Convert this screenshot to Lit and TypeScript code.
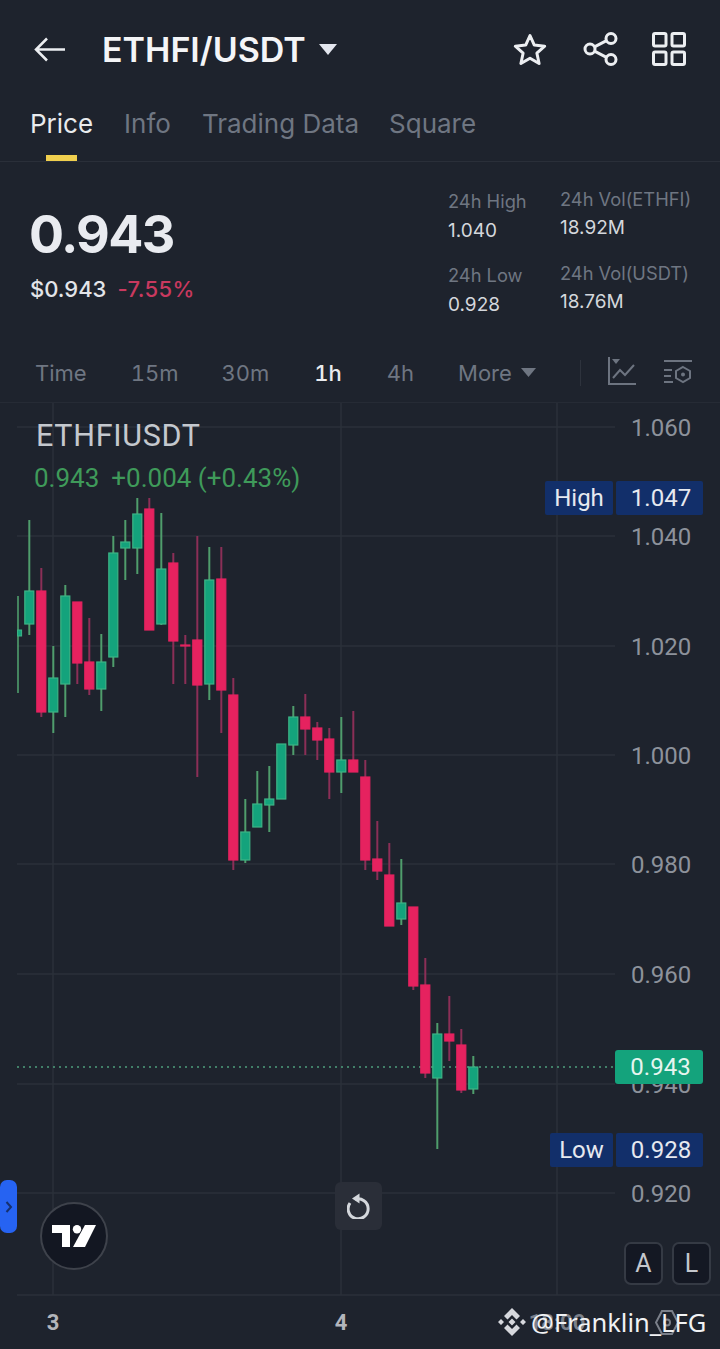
import {html, css, svg, LitElement} from 'lit';
import {customElement} from 'lit/decorators.js';

// x, wick top, wick bottom, body top, body bottom, up?
const candles: [number, number, number, number, number, boolean][] = [
  [29.3, 520, 635, 591, 624, true],
  [41.3, 568, 717, 591, 712, false],
  [53.3, 646, 733, 678, 712, true],
  [65.3, 585, 717, 596, 684, true],
  [77.3, 602, 684, 602, 663, false],
  [89.3, 618, 695, 662, 689, false],
  [101.3, 634, 711, 662, 689, true],
  [113.3, 536, 667, 553, 657, true],
  [125.3, 520, 580, 542, 548, true],
  [137.3, 498, 574, 514, 548, true],
  [149.3, 498, 630, 509, 630, false],
  [161.3, 513, 625, 569, 624, true],
  [173.3, 553, 684, 563, 641, false],
  [185.3, 635, 684, 645, 646, false],
  [197.3, 536, 777, 640, 685, false],
  [209.3, 547, 700, 580, 684, true],
  [221.3, 547, 733, 579, 690, false],
  [233.3, 678, 870, 695, 860, false],
  [245.3, 799, 863, 832, 860, true],
  [257.3, 771, 827, 804, 827, true],
  [269.3, 766, 832, 799, 805, true],
  [281.3, 744, 799, 744, 799, true],
  [293.3, 706, 755, 717, 745, true],
  [305.3, 694, 755, 717, 729, false],
  [317.3, 722, 760, 728, 740, false],
  [329.3, 728, 799, 739, 772, false],
  [341.3, 717, 793, 760, 772, true],
  [353.3, 711, 772, 760, 772, false],
  [365.3, 760, 870, 777, 860, false],
  [377.3, 821, 880, 859, 871, false],
  [389.3, 843, 926, 875, 926, false],
  [401.3, 859, 925, 903, 919, true],
  [413.3, 907, 990, 907, 986, false],
  [425.3, 958, 1078, 985, 1073, false],
  [437.3, 1023, 1149, 1034, 1078, true],
  [449.3, 996, 1061, 1034, 1041, false],
  [461.3, 1029, 1093, 1045, 1090, false],
  [473.3, 1056, 1094, 1067, 1089, true],
];

const prices: [string, number][] = [
  ['1.060', 427],
  ['1.040', 536],
  ['1.020', 646],
  ['1.000', 755],
  ['0.980', 864],
  ['0.960', 974],
  ['0.940', 1084],
  ['0.920', 1193],
];

const CHART_TOP = 403;

@customElement('app-root')
export class AppRoot extends LitElement {
  static styles = css`
    :host {
      display: block;
      width: 720px;
      height: 1349px;
      overflow: hidden;
      background: #1e232d;
      color: #eaecef;
      font-family: Inter, 'Liberation Sans', sans-serif;
    }

    .page {
      display: flex;
      flex-direction: column;
      height: 100%;
    }

    .top {
      display: flex;
      align-items: center;
      height: 98px;
      padding: 0 34px;
      box-sizing: border-box;
    }
    .top svg {
      display: block;
      flex: none;
    }
    .title {
      margin-left: 37px;
      font-size: 34px;
      font-weight: 600;
      color: #f4f5f7;
    }
    .caret {
      margin-left: 13px;
    }
    .top-icons {
      display: flex;
      align-items: center;
      gap: 34px;
      margin-left: auto;
    }
    .star {
      margin-right: 2px;
    }

    .tabs {
      display: flex;
      gap: 31px;
      height: 63px;
      padding: 0 0 0 30px;
      border-bottom: 1px solid #2a2f39;
      font-size: 26px;
      color: #6f7682;
    }
    .tab {
      position: relative;
      line-height: 52px;
      height: 63px;
    }
    .tab:last-child {
      margin-left: -1px;
    }
    .tab.on {
      color: #e9ebee;
    }
    .tab.on::after {
      content: '';
      position: absolute;
      left: 16px;
      bottom: 0;
      width: 31px;
      height: 6px;
      background: #f0cf4e;
    }

    .summary {
      display: flex;
      justify-content: space-between;
      height: 178px;
      padding-left: 30px;
    }
    .last {
      font-size: 52px;
      font-weight: 700;
      line-height: 60px;
      margin-top: 43px;
      margin-left: -1px;
      color: #e9ebf0;
      letter-spacing: -1.6px;
    }
    .fiat {
      display: flex;
      gap: 11px;
      margin-top: 9px;
      font-size: 22px;
      font-weight: 500;
      line-height: 30px;
      color: #e3e5e9;
    }
    .fiat .chg {
      color: #c9395f;
      letter-spacing: 0.4px;
    }
    .stats {
      display: grid;
      grid-template-columns: 112px 160px;
      align-content: start;
      margin-top: 25px;
    }
    .stat {
      height: 74px;
      padding-top: 2px;
      box-sizing: border-box;
    }
    .stat.shift {
      padding-top: 0;
    }
    .stat .k {
      font-size: 18.3px;
      line-height: 24px;
      color: #6f7682;
    }
    .stat .v {
      margin-top: 6px;
      font-size: 19px;
      line-height: 24px;
      color: #d4d7dc;
    }
    .stat.shift .v {
      margin-top: 5px;
    }

    .intervals {
      display: flex;
      align-items: center;
      gap: 45px;
      height: 63px;
      padding: 3px 0 1px 35px;
      box-sizing: border-box;
      font-size: 22px;
      font-variant-numeric: tabular-nums;
      color: #6f7682;
    }
    .iv {
      flex: none;
    }
    .iv:nth-child(2) {
      margin-left: -1px;
    }
    .iv:nth-child(3) {
      margin-left: -2px;
    }
    .iv:nth-child(6) {
      margin-left: -1px;
    }
    .iv.on {
      color: #e9ebee;
      font-weight: 500;
    }
    .more {
      display: flex;
      align-items: center;
      gap: 9px;
    }
    .sep {
      flex: none;
      width: 1px;
      height: 26px;
      background: #2e333d;
      margin-left: -1px;
    }
    .iv-icons {
      display: flex;
      gap: 28px;
      margin: 0 0 4px -18px;
    }
    .iv-icons svg {
      display: block;
    }

    .chart {
      position: relative;
      flex: 1;
      border-top: 1px solid #262b35;
      margin-top: -1px;
      overflow: hidden;
      font-family: Roboto, 'Liberation Sans', sans-serif;
    }
    .canvas {
      position: absolute;
      left: 0;
      top: 0;
    }
    .symbol {
      position: absolute;
      left: 36px;
      top: 15px;
      font-size: 30.5px;
      letter-spacing: 0.7px;
      line-height: 36px;
      color: #c4c8ce;
    }
    .ohlc {
      position: absolute;
      left: 34px;
      top: 58px;
      display: flex;
      gap: 12px;
      font-size: 26px;
      line-height: 34px;
      color: #3f9a5a;
      white-space: nowrap;
    }
    .price {
      position: absolute;
      left: 631px;
      font-size: 24px;
      line-height: 30px;
      color: #8d929b;
      transform: translateY(-14px);
    }
    .tag {
      position: absolute;
      display: flex;
      align-items: center;
      justify-content: center;
      height: 34px;
      font-size: 24px;
      border-radius: 2px;
      background: #122f6a;
      color: #e6e9ef;
    }
    .tag.now {
      left: 615px;
      top: 647px;
      width: 88px;
      padding-left: 3px;
      box-sizing: border-box;
      border-radius: 3px;
      background: #14a37c;
      color: #e6f5ef;
    }
    .tag.val {
      left: 616px;
      width: 87px;
      padding-left: 3px;
      box-sizing: border-box;
    }
    .tag.high {
      top: 78px;
    }
    .tag.low {
      top: 730px;
    }
    .tag.high-k {
      left: 545px;
      top: 78px;
      width: 68px;
    }
    .tag.low-k {
      left: 550px;
      top: 730px;
      width: 63px;
    }
    .side-tab {
      position: absolute;
      left: 0;
      top: 777px;
      display: flex;
      align-items: center;
      justify-content: center;
      width: 17px;
      height: 53px;
      border-radius: 7px;
      background: #2663f2;
    }
    .tv {
      position: absolute;
      left: 40px;
      top: 799px;
      display: flex;
      align-items: center;
      justify-content: center;
      width: 68px;
      height: 68px;
      box-sizing: border-box;
      border: 2px solid #3e424b;
      border-radius: 50%;
      background: #131722;
    }
    .reset {
      position: absolute;
      left: 335px;
      top: 779px;
      display: flex;
      align-items: center;
      justify-content: center;
      width: 47px;
      height: 48px;
      border-radius: 6px;
      background: #2a2e38;
    }
    .mode {
      position: absolute;
      top: 839px;
      display: flex;
      align-items: center;
      justify-content: center;
      width: 39px;
      height: 43px;
      box-sizing: border-box;
      border: 2px solid #353a44;
      border-radius: 7px;
      background: #141823;
      color: #c4c7cc;
      font-size: 25px;
    }
    .mode.a {
      left: 624px;
    }
    .mode.l {
      left: 672px;
    }
    .tick {
      position: absolute;
      top: 905px;
      font-size: 22px;
      font-weight: 700;
      line-height: 30px;
      color: #b2b5bc;
      transform: translateX(-50%);
    }
    .tick.dim {
      color: #7b808a;
    }
    .ghost {
      position: absolute;
      left: 655px;
      top: 907px;
    }
    .mark {
      position: absolute;
      left: 498px;
      top: 901px;
      display: flex;
      align-items: center;
      gap: 5px;
      font-family: 'Noto Sans', 'Liberation Sans', sans-serif;
      font-size: 25.5px;
      line-height: 36px;
      color: #f1f2f4;
      white-space: nowrap;
    }
  `;

  private grid() {
    return svg`
      ${prices.map(([, y]) => svg`<line x1="17" x2="615" y1=${y} y2=${y} stroke="#2b303a" stroke-width="1.5" />`)}
      <line x1="17" x2="720" y1="1295" y2="1295" stroke="#2b303a" stroke-width="1.5" />
      ${[53, 341, 557].map((x) => svg`<line x1=${x} x2=${x} y1="403" y2="1295" stroke="#2b303a" stroke-width="1.5" />`)}
    `;
  }

  private candle([x, wt, wb, bt, bb, up]: (typeof candles)[number]) {
    const wick = up ? '#4f9d6c' : '#8b2f57';
    const fill = up ? '#14a37c' : '#e6225f';
    const edge = up ? '#3db486' : '#e6225f';
    return svg`
      <line x1=${x} x2=${x} y1=${wt} y2=${wb} stroke=${wick} stroke-width="2" />
      <rect x=${x - 4.5} y=${bt} width="9" height=${Math.max(bb - bt, 1)} fill=${fill} stroke=${edge} stroke-width="1.2" />
    `;
  }

  render() {
    return html`
      <div class="page">
        <div class="top">
          <svg width="31" height="25" viewBox="0 0 31 25" fill="none" stroke="#eceef1" stroke-width="2.5">
            <path d="M31 12.5H2M13 1.5L2 12.5l11 11" />
          </svg>
          <span class="title">ETHFI/USDT</span>
          <svg class="caret" width="18" height="11" viewBox="0 0 18 11"><path d="M0 0h18L9 11z" fill="#e3e6ee" /></svg>
          <div class="top-icons">
            <svg class="star" width="34" height="33" viewBox="0 0 34 33" fill="none" stroke="#eceef1" stroke-width="3" stroke-linejoin="round">
              <path d="M17 2.5l4.3 9.6 10.4 1.1-7.8 7 2.2 10.3L17 25.2 7.9 30.5l2.2-10.3-7.8-7 10.4-1.1z" />
            </svg>
            <svg width="35" height="34" viewBox="0 0 35 34" fill="none" stroke="#eceef1" stroke-width="3">
              <circle cx="7" cy="17" r="5" />
              <circle cx="28" cy="6.5" r="5" />
              <circle cx="28" cy="27.5" r="5" />
              <path d="M11.5 14.8L23.5 8.7M11.5 19.2L23.5 25.3" />
            </svg>
            <svg width="34" height="34" viewBox="0 0 34 34" fill="none" stroke="#eceef1" stroke-width="3">
              <rect x="1.5" y="1.5" width="12.5" height="12.5" rx="1.5" />
              <rect x="20" y="1.5" width="12.5" height="12.5" rx="1.5" />
              <rect x="1.5" y="20" width="12.5" height="12.5" rx="1.5" />
              <rect x="20" y="20" width="12.5" height="12.5" rx="1.5" />
            </svg>
          </div>
        </div>

        <div class="tabs">
          <div class="tab on">Price</div>
          <div class="tab">Info</div>
          <div class="tab">Trading Data</div>
          <div class="tab">Square</div>
        </div>

        <div class="summary">
          <div>
            <div class="last">0.943</div>
            <div class="fiat"><span>$0.943</span><span class="chg">-7.55%</span></div>
          </div>
          <div class="stats">
            <div class="stat"><div class="k">24h High</div><div class="v">1.040</div></div>
            <div class="stat shift"><div class="k">24h Vol(ETHFI)</div><div class="v">18.92M</div></div>
            <div class="stat"><div class="k">24h Low</div><div class="v">0.928</div></div>
            <div class="stat shift"><div class="k">24h Vol(USDT)</div><div class="v">18.76M</div></div>
          </div>
        </div>

        <div class="intervals">
          <span class="iv">Time</span>
          <span class="iv">15m</span>
          <span class="iv">30m</span>
          <span class="iv on">1h</span>
          <span class="iv">4h</span>
          <span class="iv more">More
            <svg width="15" height="9" viewBox="0 0 15 9"><path d="M0 0h15L7.5 9z" fill="#6f7682" /></svg>
          </span>
          <span class="sep"></span>
          <div class="iv-icons">
            <svg width="28" height="28" viewBox="0 0 28 28" fill="none" stroke="#6d7480" stroke-width="2">
              <path d="M1 0v27h27M5 21l7-8 5 5 9-10" />
              <path d="M4 2h8L8 7z" fill="#6d7480" stroke="none" />
            </svg>
            <svg width="28" height="28" viewBox="0 0 28 28" fill="none" stroke="#6d7480" stroke-width="2">
              <path d="M0 4h28M0 13h8M0 19h7M0 25h9" />
              <path d="M19 10l7 4v7l-7 4-7-4v-7z" />
              <circle cx="19" cy="17.5" r="2" fill="#6d7480" stroke="none" />
            </svg>
          </div>
        </div>

        <div class="chart">
          <svg class="canvas" width="720" height="946" viewBox="0 ${CHART_TOP} 720 946">
            ${this.grid()}
            <line x1="17" x2="615" y1="1067" y2="1067" stroke="#4e9f7c" stroke-width="1.5" stroke-dasharray="2 4" />
            <line x1="18" x2="18" y1="596" y2="693" stroke="#4f9d6c" stroke-width="1.6" />
            <rect x="17.6" y="630" width="4" height="6" fill="#14a37c" stroke="#3db486" />
            ${candles.map((c) => this.candle(c))}
          </svg>

          <div class="symbol">ETHFIUSDT</div>
          <div class="ohlc"><span>0.943</span><span>+0.004 (+0.43%)</span></div>

          ${prices.map(([p, y]) => html`<div class="price" style="top:${y - CHART_TOP}px">${p}</div>`)}

          <div class="tag high-k">High</div>
          <div class="tag val high">1.047</div>
          <div class="tag now">0.943</div>
          <div class="tag low-k">Low</div>
          <div class="tag val low">0.928</div>

          <div class="side-tab">
            <svg width="8" height="14" viewBox="0 0 8 14" fill="none" stroke="#16306e" stroke-width="2"><path d="M1.5 2l4.5 5-4.5 5" /></svg>
          </div>
          <div class="tv">
            <svg width="44" height="22" viewBox="0 0 44 22" fill="#fff">
              <path d="M0 0h18v22h-8V8H0z" />
              <circle cx="25" cy="4.2" r="4.2" />
              <path d="M33 0h11L33 22H21z" />
            </svg>
          </div>
          <div class="reset">
            <svg width="24" height="26" viewBox="0 0 24 26" fill="none" stroke="#d4d7dc" stroke-width="3">
              <path d="M8 6.3a10 10 0 1 1-5 3.7" />
              <path d="M12.5 0.5v10L5 5.5z" fill="#d4d7dc" stroke="none" />
            </svg>
          </div>
          <div class="mode a">A</div>
          <div class="mode l">L</div>

          <div class="tick" style="left:53px">3</div>
          <div class="tick" style="left:341px">4</div>
          <div class="tick dim" style="left:557px">18:00</div>
          <svg class="ghost" width="24" height="25" viewBox="0 0 24 25" fill="none" stroke="#7b808a" stroke-width="2">
            <path d="M7 1h10l6 11.5L17 24H7L1 12.5z" />
            <circle cx="12" cy="12.5" r="3" />
          </svg>
          <div class="mark">
            <svg width="28" height="28" viewBox="0 0 28 28" fill="#d6d8dd">
              <path d="M14 0l8 8-3.5 3.5L14 7l-4.5 4.5L6 8z" />
              <path d="M14 28l8-8-3.5-3.5L14 21l-4.5-4.5L6 20z" />
              <path d="M0 14l3-3 3 3-3 3zM22 14l3-3 3 3-3 3zM14 10.5l3.5 3.5-3.5 3.5-3.5-3.5z" />
            </svg>
            <span>@Franklin_LFG</span>
          </div>
        </div>
      </div>
    `;
  }
}
